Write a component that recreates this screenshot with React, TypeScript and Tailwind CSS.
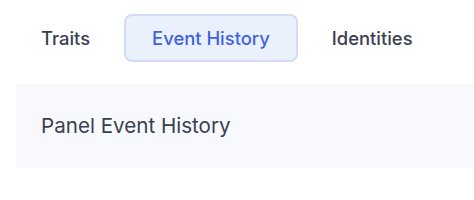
import { useState } from 'react';

const tabs = ['Traits', 'Event History', 'Identities'];

const App = () => {
  const [active, setActive] = useState('Event History');

  return (
    <div className="bg-white h-[200px] w-[474px] overflow-hidden pt-[14px] pl-[13px]" style={{ fontFamily: 'Inter, "Noto Sans", sans-serif' }}>
      <div className="flex gap-[6px]">
        {tabs.map(tab => (
          <button
            key={tab}
            onClick={() => setActive(tab)}
            className={
              active === tab
                ? 'h-[48px] pt-[1px] px-[26px] rounded-[8px] border-2 border-[#d3dbf7] bg-[#ebf0fd] text-[#3d63dd] text-[18.4px] font-medium'
                : 'h-[48px] pt-[1px] px-[26px] rounded-[8px] border-2 border-transparent text-[#3a4051] text-[18.4px] font-medium'
            }
          >
            {tab}
          </button>
        ))}
      </div>
      <div className="mt-[22px] ml-[3px] h-[84px] bg-[#f8f9fc] flex items-center pl-[25px]">
        <span className="text-[20.6px] text-[#3a4051]">Panel {active}</span>
      </div>
    </div>
  );
};

export default App;
